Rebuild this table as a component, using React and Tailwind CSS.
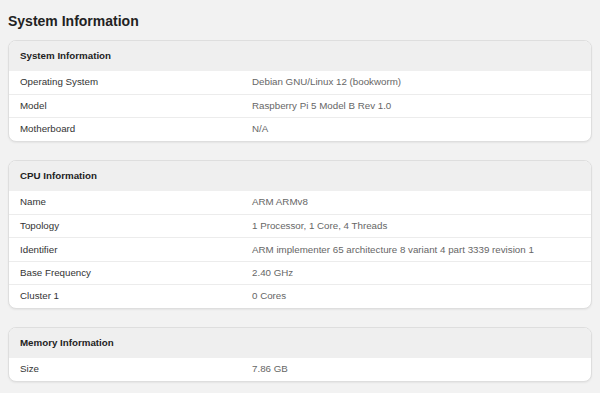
import React from 'react';

const sections = [
    {
        title: 'System Information',
        rows: [
            ['Operating System', 'Debian GNU/Linux 12 (bookworm)'],
            ['Model', 'Raspberry Pi 5 Model B Rev 1.0'],
            ['Motherboard', 'N/A'],
        ],
    },
    {
        title: 'CPU Information',
        rows: [
            ['Name', 'ARM ARMv8'],
            ['Topology', '1 Processor, 1 Core, 4 Threads'],
            ['Identifier', 'ARM implementer 65 architecture 8 variant 4 part 3339 revision 1'],
            ['Base Frequency', '2.40 GHz'],
            ['Cluster 1', '0 Cores'],
        ],
    },
    {
        title: 'Memory Information',
        rows: [['Size', '7.86 GB']],
    },
];

function InfoCard({ title, rows }) {
    return (
        <div className="bg-white border border-[#dedede] rounded-[8px] overflow-hidden shadow-[0_1px_2px_rgba(0,0,0,0.06)]">
            <div className="h-[30px] flex items-center px-[11px] bg-[#efefef] font-bold text-[#222]">
                {title}
            </div>
            {rows.map(([label, value], i) => (
                <div
                    key={label}
                    className={`h-[23.4px] flex items-center px-[11px] ${i > 0 ? 'border-t border-[#ececec]' : ''}`}
                >
                    <span className="w-[232px] shrink-0 text-[#333]">{label}</span>
                    <span className="flex-1 text-[#666] whitespace-nowrap">{value}</span>
                </div>
            ))}
        </div>
    );
}

export default function App() {
    return (
        <div className="min-h-[393px] bg-[#f2f2f2] px-[8px] pt-[12.5px] pb-[12px] text-[9.75px] leading-[12px] font-['Liberation_Sans',Arial,sans-serif]">
            <h1 className="text-[14px] leading-[16px] font-bold text-[#222] mb-[11px]">System Information</h1>
            <div className="flex flex-col gap-[18px]">
                {sections.map((s) => (
                    <InfoCard key={s.title} title={s.title} rows={s.rows} />
                ))}
            </div>
        </div>
    );
}
